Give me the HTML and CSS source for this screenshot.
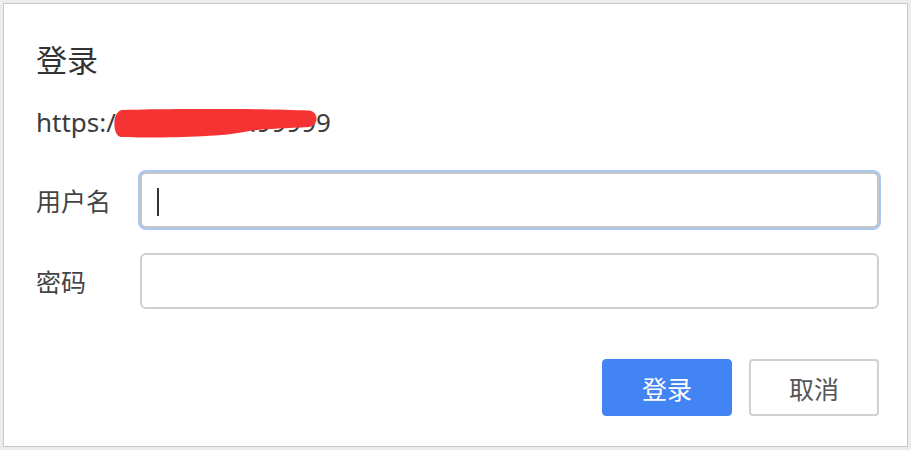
FILE: index.html
```html
<!DOCTYPE html>
<html lang="zh-CN">
<head>
<meta charset="utf-8">
<title>登录</title>
<link rel="stylesheet" href="styles.css">
</head>
<body>
<div class="dialog">
  <h1 class="title">登录</h1>
  <div class="url">
    <span class="url-text">https://<span class="host-gap"></span>.99999</span>
    <svg class="redact" width="206" height="29" viewBox="0 0 206 29" aria-hidden="true">
      <path d="M9,1 C60,-0.5 150,-0.5 196,1.5 C206,2.5 206,17 196,18 C170,19.5 146,20 134,22.5 C104,29 32,29 8,28 C-1,27 -1,2 9,1 Z" fill="#f53333"/>
    </svg>
  </div>
  <div class="form">
    <label class="label" for="user">用户名</label>
    <div class="field focused"><input id="user" class="input" type="text"><span class="caret"></span></div>
    <label class="label" for="pass">密码</label>
    <div class="field"><input id="pass" class="input" type="password"></div>
  </div>
  <div class="actions">
    <button class="btn primary">登录</button>
    <button class="btn secondary">取消</button>
  </div>
</div>
</body>
</html>
```

FILE: styles.css
```css
html, body {
  margin: 0;
  padding: 0;
  height: 100%;
}
body {
  background: #ececec;
  font-family: "Noto Sans", "Noto Sans CJK SC", sans-serif;
  color: #333;
}
.dialog {
  box-sizing: border-box;
  margin: 3px;
  height: 444px;
  background: #fff;
  border: 1px solid #c9c9c9;
  padding: 36px 28px 0 32px;
  display: flex;
  flex-direction: column;
}
.title {
  margin: 0;
  font-weight: normal;
  font-size: 31px;
  line-height: 40px;
  color: #333;
}
.url {
  margin-top: 26px;
  font-size: 26px;
  line-height: 32px;
  color: #3c3c3c;
  position: relative;
  white-space: nowrap;
}
.host-gap {
  display: inline-block;
  width: 124px;
}
.redact {
  position: absolute;
  left: 77px;
  top: 3px;
}
.form {
  margin-top: 34px;
  display: grid;
  grid-template-columns: 104px 1fr;
  row-gap: 25px;
  align-items: center;
}
.label {
  font-size: 25px;
  color: #444;
}
.field {
  position: relative;
  height: 56px;
  box-sizing: border-box;
  border: 2px solid #cfcfcf;
  border-radius: 6px;
  background: #fff;
}
.field.focused {
  border-color: #c6c6c6;
  box-shadow: 0 0 0 2px #a9c6f5;
}
.input {
  width: 100%;
  height: 100%;
  box-sizing: border-box;
  border: 0;
  outline: none;
  background: transparent;
  padding: 0 14px;
  font-size: 22px;
}
.caret {
  position: absolute;
  left: 15px;
  top: 14px;
  width: 2px;
  height: 28px;
  background: #333;
}
.actions {
  margin-top: 50px;
  display: flex;
  justify-content: flex-end;
  gap: 17px;
}
.btn {
  width: 130px;
  height: 57px;
  border-radius: 4px;
  font-family: "Noto Sans", "Noto Sans CJK SC", sans-serif;
  font-size: 25px;
  cursor: pointer;
}
.primary {
  background: #4284f3;
  color: #fff;
  border: 1px solid #4284f3;
}
.secondary {
  background: #fff;
  color: #555;
  border: 2px solid #d0d0d0;
}
```
